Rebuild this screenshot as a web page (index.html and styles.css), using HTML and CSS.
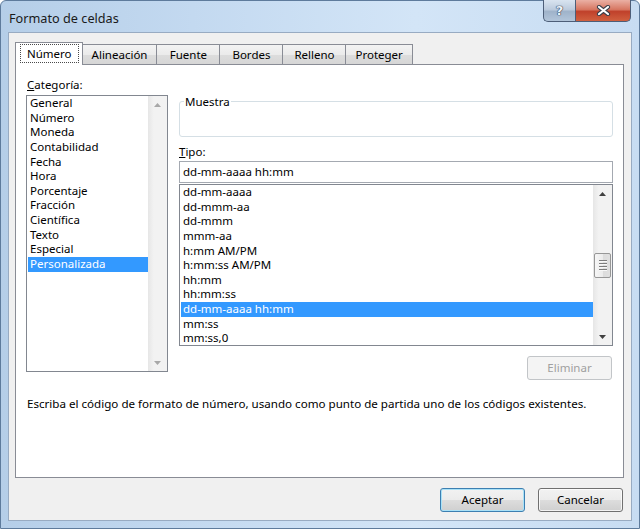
FILE: index.html
```html
<!DOCTYPE html>
<html lang="es">
<head>
<meta charset="utf-8">
<title>Formato de celdas</title>
<link rel="stylesheet" href="styles.css">
</head>
<body>
<div class="window">
  <div class="titlebar">
    <span class="title">Formato de celdas</span>
    <div class="caps">
      <div class="cap help"><span class="help-glyph">?</span></div>
      <div class="cap close">
        <svg width="15" height="11" viewBox="0 0 15 11">
          <path d="M3 2 L12 9 M12 2 L3 9" stroke="#3a3f4a" stroke-width="4.2" stroke-linecap="round" fill="none"/>
          <path d="M3 2 L12 9 M12 2 L3 9" stroke="#ffffff" stroke-width="2.2" stroke-linecap="round" fill="none"/>
        </svg>
      </div>
    </div>
  </div>
  <div class="client">
    <div class="tabs">
      <div class="tab active"><span class="focus">Número</span></div>
      <div class="tab">Alineación</div>
      <div class="tab">Fuente</div>
      <div class="tab">Bordes</div>
      <div class="tab">Relleno</div>
      <div class="tab">Proteger</div>
    </div>
    <div class="panel">
      <div class="panel-main">
        <div class="col-left">
          <div class="label cat-label"><u>C</u>ategoría:</div>
          <div class="listbox cat-list">
            <div class="items">
              <div class="item">General</div>
              <div class="item">Número</div>
              <div class="item">Moneda</div>
              <div class="item">Contabilidad</div>
              <div class="item">Fecha</div>
              <div class="item">Hora</div>
              <div class="item">Porcentaje</div>
              <div class="item">Fracción</div>
              <div class="item">Científica</div>
              <div class="item">Texto</div>
              <div class="item">Especial</div>
              <div class="item sel">Personalizada</div>
            </div>
            <div class="vscroll disabled">
              <div class="arrow"><svg width="7" height="4" viewBox="0 0 7 4"><path d="M0 4 L3.5 0 L7 4 Z"/></svg></div>
              <div class="track"></div>
              <div class="arrow"><svg width="7" height="4" viewBox="0 0 7 4"><path d="M0 0 L3.5 4 L7 0 Z"/></svg></div>
            </div>
          </div>
        </div>
        <div class="col-right">
          <fieldset class="muestra"><legend>Muestra</legend></fieldset>
          <div class="label tipo-label"><u>T</u>ipo:</div>
          <div class="input">dd-mm-aaaa hh:mm</div>
          <div class="listbox type-list">
            <div class="items">
              <div class="item">dd-mm-aaaa</div>
              <div class="item">dd-mmm-aa</div>
              <div class="item">dd-mmm</div>
              <div class="item">mmm-aa</div>
              <div class="item">h:mm AM/PM</div>
              <div class="item">h:mm:ss AM/PM</div>
              <div class="item">hh:mm</div>
              <div class="item">hh:mm:ss</div>
              <div class="item sel">dd-mm-aaaa hh:mm</div>
              <div class="item">mm:ss</div>
              <div class="item">mm:ss,0</div>
            </div>
            <div class="vscroll">
              <div class="arrow"><svg width="7" height="4" viewBox="0 0 7 4"><path d="M0 4 L3.5 0 L7 4 Z"/></svg></div>
              <div class="track">
                <div class="thumb">
                  <span class="grip"></span><span class="grip"></span><span class="grip"></span><span class="grip"></span>
                </div>
              </div>
              <div class="arrow"><svg width="7" height="4" viewBox="0 0 7 4"><path d="M0 0 L3.5 4 L7 0 Z"/></svg></div>
            </div>
          </div>
          <div class="btn-row">
            <button class="btn disabled" disabled>Eliminar</button>
          </div>
        </div>
      </div>
      <p class="desc">Escriba el código de formato de número, usando como punto de partida uno de los códigos existentes.</p>
    </div>
    <div class="footer">
      <button class="btn default">Aceptar</button>
      <button class="btn">Cancelar</button>
    </div>
  </div>
</div>
</body>
</html>
```
FILE: styles.css
```css
* { box-sizing: border-box; }
html, body { margin: 0; padding: 0; }
body {
  width: 640px;
  height: 529px;
  overflow: hidden;
  font-family: "Noto Sans", "Segoe UI", sans-serif;
  font-size: 11.5px;
  color: #000;
  background: #fff;
}

.window {
  width: 640px;
  height: 529px;
  display: flex;
  flex-direction: column;
  border: 1px solid #5e7b9c;
  border-radius: 6px 6px 0 0;
  padding: 0 7px 7px;
  background: linear-gradient(90deg, #b5cee8 0%, #c3d9f0 30%, #d3e5f7 65%, #c7dcf2 100%);
}

.titlebar {
  height: 31px;
  flex-shrink: 0;
  display: flex;
  align-items: flex-start;
}
.title {
  margin: 9px 0 0 1px;
  line-height: 16px;
  font-size: 12.7px;
  color: #1a1a1a;
}
.caps {
  margin-left: auto;
  margin-top: -1px;
  margin-right: 1px;
  display: flex;
}
.cap {
  height: 22px;
  display: flex;
  align-items: center;
  justify-content: center;
  border: 1px solid #4d5e78;
  border-top: none;
}
.cap.help {
  width: 32px;
  border-right: none;
  border-radius: 0 0 0 5px;
  background: linear-gradient(180deg, #d9e4f0 0%, #bccbdd 45%, #9fb3ca 55%, #b2c5da 100%);
}
.cap.close {
  width: 56px;
  border-radius: 0 0 5px 0;
  background: linear-gradient(180deg, #eab0a4 0%, #d77762 45%, #c0412b 55%, #d0603f 100%);
}
.help-glyph {
  font-family: "DejaVu Sans", sans-serif;
  font-weight: bold;
  font-size: 13px;
  line-height: 13px;
  color: #eef3f9;
  text-shadow: 0 0 1px #2f415b, 0 0 1px #2f415b, 0 0 1px #2f415b;
}

.client {
  flex: 1;
  background: #f0f0f0;
  border: 1px solid #98abc2;
  padding: 9px 7px 0 6px;
  display: flex;
  flex-direction: column;
}

.tabs {
  display: flex;
  align-items: flex-end;
  height: 22px;
  position: relative;
  z-index: 1;
}
.tab {
  height: 20px;
  min-width: 64px;
  padding: 0 9px;
  margin-left: -1px;
  border: 1px solid #898c95;
  border-bottom: none;
  background: linear-gradient(180deg, #f3f3f3 0%, #ebebeb 50%, #dddddd 51%, #d6d6d6 100%);
  line-height: 19px;
  text-align: center;
  white-space: nowrap;
}
.tab.active {
  height: 23px;
  min-width: 0;
  margin-left: 0;
  margin-bottom: -1px;
  padding: 1px 3px 0 4px;
  background: #fff;
  position: relative;
  z-index: 2;
}
.focus {
  display: block;
  border: 1px dotted #4a4a4a;
  padding: 0 6px;
  line-height: 17px;
}

.panel {
  height: 414px;
  flex-shrink: 0;
  background: #fff;
  border: 1px solid #898c95;
  padding: 12px 10px 0 10px;
}
.panel-main {
  display: flex;
  gap: 11px;
}
.col-left { width: 142px; }
.col-right {
  width: 434px;
  display: flex;
  flex-direction: column;
}
.label {
  line-height: 15px;
  height: 15px;
  white-space: nowrap;
}
.cat-label { padding-left: 1px; }

.listbox {
  display: flex;
  border: 1px solid #828790;
  background: #fff;
  overflow: hidden;
}
.cat-list {
  margin-top: 3px;
  height: 277px;
}
.items {
  flex: 1;
  margin-left: 1px;
  min-width: 0;
  overflow: hidden;
}
.item {
  height: 14.65px;
  line-height: 14.65px;
  padding-left: 2px;
  white-space: nowrap;
}
.item.sel {
  background: #3399ff;
  color: #fff;
}

.vscroll {
  width: 19px;
  flex-shrink: 0;
  display: flex;
  flex-direction: column;
  background: linear-gradient(90deg, #e6e6e6 0%, #f2f2f2 30%, #f2f2f2 100%);
}
.arrow {
  height: 17px;
  flex-shrink: 0;
  display: flex;
  align-items: center;
  justify-content: center;
}
.arrow svg { fill: #404040; display: block; }
.vscroll.disabled .arrow svg { fill: #a8a8a8; }
.track { flex: 1; }
.thumb {
  margin: 51px 1px 0 1px;
  height: 25px;
  border: 1px solid #979797;
  border-radius: 2px;
  background: linear-gradient(90deg, #f6f6f6 0%, #ececec 50%, #dcdcdc 51%, #e0e0e0 100%);
  display: flex;
  flex-direction: column;
  align-items: center;
  justify-content: center;
  gap: 1px;
}
.grip {
  display: block;
  width: 8px;
  height: 2px;
  border-top: 1px solid #7d7d7d;
  border-bottom: 1px solid #f8f8f8;
}

fieldset.muestra {
  margin: 17px 0 0;
  padding: 0 0 0 4px;
  border: 1px solid #d5dfe5;
  border-radius: 3px;
  height: 43px;
  min-width: 0;
}
.muestra legend {
  padding: 0 1px;
  line-height: 15px;
  font-size: 11.5px;
}
.tipo-label { margin-top: 7px; }
.input {
  margin-top: 2px;
  height: 22px;
  border: 1px solid #a4a9b1;
  padding-left: 3px;
  line-height: 20px;
  white-space: nowrap;
}
.type-list {
  margin-top: 1px;
  height: 162px;
}
.btn-row {
  display: flex;
  justify-content: flex-end;
  margin-top: 10px;
  padding-right: 1px;
}

.btn {
  width: 85px;
  height: 24px;
  padding: 0;
  border: 1px solid #707070;
  border-radius: 3px;
  background: linear-gradient(180deg, #f2f2f2 0%, #ebebeb 50%, #dddddd 51%, #cfcfcf 100%);
  box-shadow: inset 0 0 0 1px rgba(255, 255, 255, 0.75);
  font-family: "Noto Sans", "Segoe UI", sans-serif;
  font-size: 11.5px;
  color: #000;
  line-height: 20px;
}
.btn.default {
  border-color: #3c7fb1;
  box-shadow: inset 0 0 0 1px #a9e1f7;
}
.btn.disabled {
  border-color: #c2c5c8;
  background: #f4f4f4;
  box-shadow: none;
  color: #a0a0a0;
}

.desc {
  margin: 16px 0 0 1px;
  line-height: 15px;
  font-size: 11.6px;
  white-space: nowrap;
}

.footer {
  display: flex;
  justify-content: flex-end;
  gap: 13px;
  margin-top: 10px;
  margin-right: 1px;
}
```
